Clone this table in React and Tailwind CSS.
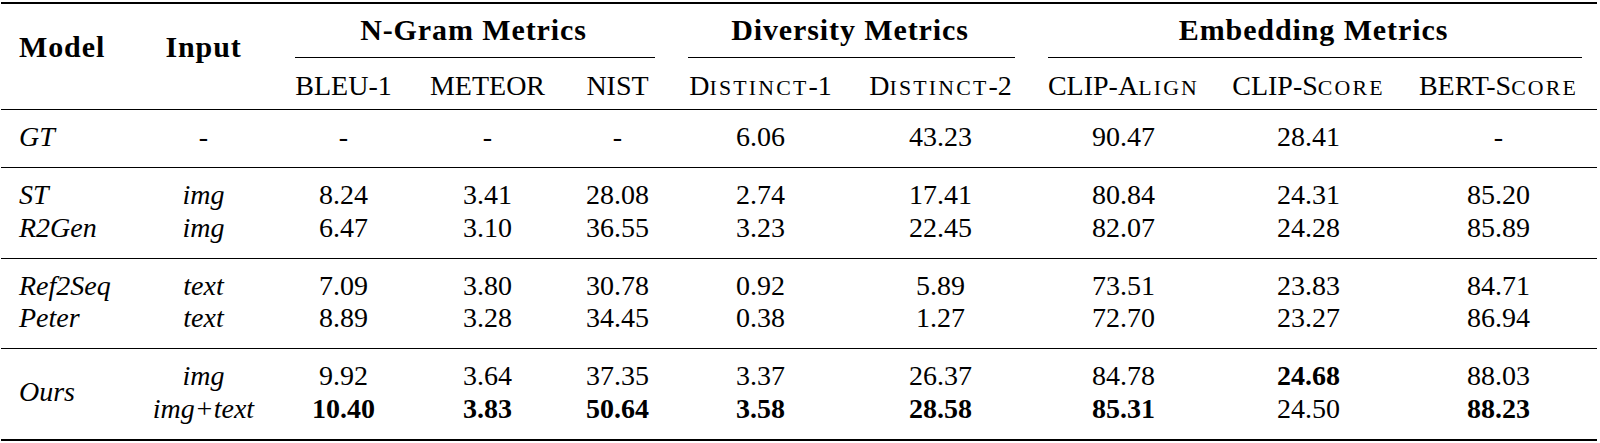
import React from 'react'

const cols = 'grid grid-cols-[129px_147px_133px_155px_105px_181px_179px_187px_183px_197px]'

const SC = ({ children }) => (
  <span className="text-[0.78em] tracking-[0.1em]">{children}</span>
)

const groups = [
  { title: 'N-Gram Metrics', span: 'col-span-3' },
  { title: 'Diversity Metrics', span: 'col-span-2' },
  { title: 'Embedding Metrics', span: 'col-span-3' },
]

const subheads = [
  <>BLEU-1</>,
  <>METEOR</>,
  <>NIST</>,
  <>D<SC>ISTINCT</SC>-1</>,
  <>D<SC>ISTINCT</SC>-2</>,
  <>CLIP-A<SC>LIGN</SC></>,
  <>CLIP-S<SC>CORE</SC></>,
  <>BERT-S<SC>CORE</SC></>,
]

const sections = [
  [['GT', '-', '-', '-', '-', '6.06', '43.23', '90.47', '28.41', '-']],
  [
    ['ST', 'img', '8.24', '3.41', '28.08', '2.74', '17.41', '80.84', '24.31', '85.20'],
    ['R2Gen', 'img', '6.47', '3.10', '36.55', '3.23', '22.45', '82.07', '24.28', '85.89'],
  ],
  [
    ['Ref2Seq', 'text', '7.09', '3.80', '30.78', '0.92', '5.89', '73.51', '23.83', '84.71'],
    ['Peter', 'text', '8.89', '3.28', '34.45', '0.38', '1.27', '72.70', '23.27', '86.94'],
  ],
]

const ours = [
  { input: 'img', vals: ['9.92', '3.64', '37.35', '3.37', '26.37', '84.78', '24.68', '88.03'], bold: [6] },
  { input: 'img+text', vals: ['10.40', '3.83', '50.64', '3.58', '28.58', '85.31', '24.50', '88.23'], bold: [0, 1, 2, 3, 4, 5, 7] },
]

const Rule = ({ heavy }) => (
  <div className={heavy ? 'h-[2px] bg-black' : 'h-[1px] bg-black'} />
)

const Block = ({ rows }) => (
  <div className={`${cols} pt-[11px] pb-[13.5px] leading-[32.5px]`}>
    {rows.map((row, r) =>
      row.map((cell, i) => (
        <div
          key={`${r}-${i}`}
          className={i === 0 ? 'pl-[18px] italic' : i === 1 ? 'text-center italic' : 'text-center'}
        >
          {cell}
        </div>
      ))
    )}
  </div>
)

export default function App() {
  return (
    <div className="bg-white w-[1600px] h-[443px] overflow-hidden text-black text-[28px] [font-family:'Liberation_Serif',serif]">
      <div className="ml-[1px] w-[1596px] pt-[2px]">
        <Rule heavy />

        <div className={`${cols} grid-rows-[54px_51px]`}>
          <div className="row-span-2 pl-[18px] pt-[27px] leading-[32px] font-bold text-[30px] tracking-[0.03em]">
            Model
          </div>
          <div className="row-span-2 pt-[27px] leading-[32px] text-center font-bold text-[30px] tracking-[0.03em]">
            Input
          </div>
          {groups.map((g) => (
            <div key={g.title} className={`${g.span} flex flex-col`}>
              <div className="pt-[10px] leading-[32px] text-center font-bold text-[30px] tracking-[0.03em]">
                {g.title}
              </div>
              <div className="mt-auto ml-[18px] mr-[15px] h-[1px] bg-black" />
            </div>
          ))}
          {subheads.map((s, i) => (
            <div key={i} className="pt-[12px] leading-[32px] text-center whitespace-nowrap">
              {s}
            </div>
          ))}
        </div>

        <Rule />
        <Block rows={sections[0]} />
        <Rule />
        <Block rows={sections[1]} />
        <Rule />
        <Block rows={sections[2]} />
        <Rule />

        <div className={`${cols} pt-[11px] pb-[13.5px] leading-[32.5px]`}>
          <div className="row-span-2 pl-[18px] italic flex items-center">Ours</div>
          {ours.map((row) => (
            <React.Fragment key={row.input}>
              <div className="text-center italic">{row.input}</div>
              {row.vals.map((v, i) => (
                <div key={i} className={row.bold.includes(i) ? 'text-center font-bold' : 'text-center'}>
                  {v}
                </div>
              ))}
            </React.Fragment>
          ))}
        </div>

        <Rule heavy />
      </div>
    </div>
  )
}
